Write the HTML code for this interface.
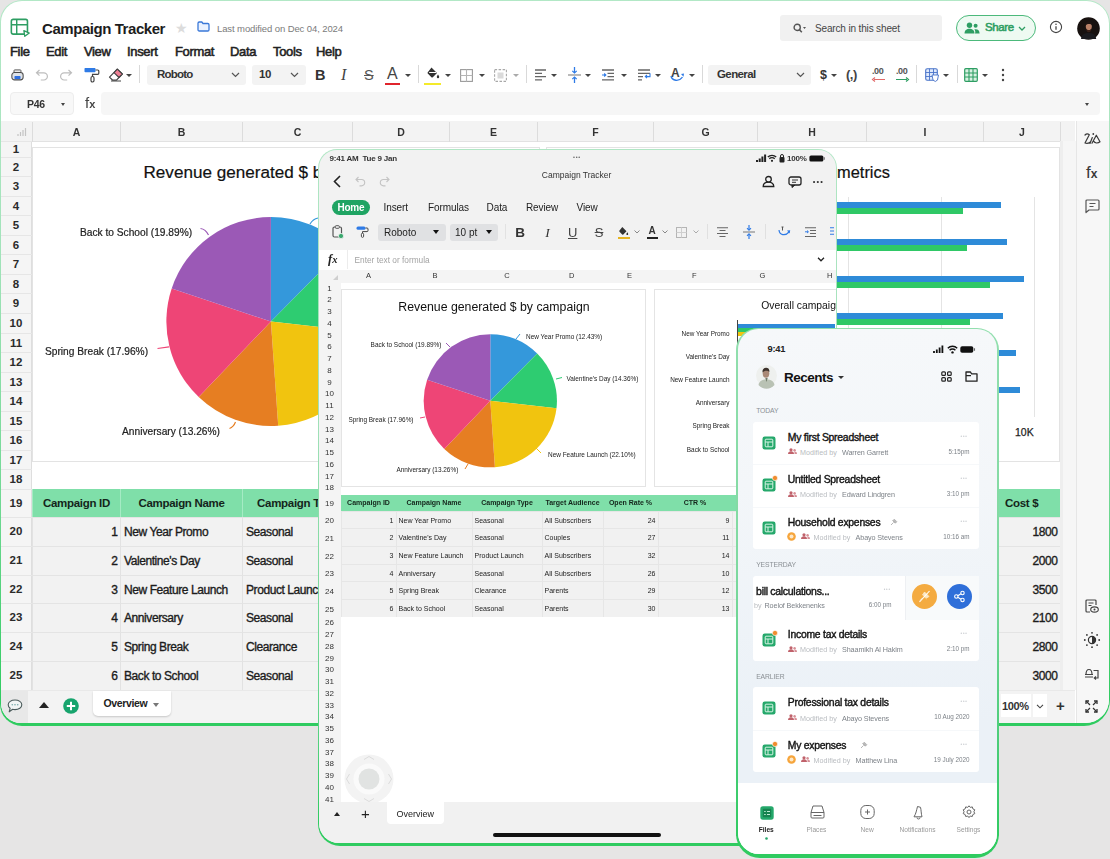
<!DOCTYPE html>
<html lang="en">
<head>
<meta charset="utf-8">
<title>Campaign Tracker</title>
<style>
*{box-sizing:border-box;margin:0;padding:0}
html,body{width:1110px;height:859px;overflow:hidden}
body{background:#e6e5e5;font-family:"Liberation Sans",sans-serif;color:#222;position:relative}
.abs{position:absolute}
svg{position:absolute;overflow:visible}
/* ---------- desktop ---------- */
#desk,#tab,#ph{filter:blur(.6px)}
#desk{position:absolute;left:0;top:0;width:1110px;height:726px;background:linear-gradient(180deg,#b2e8c6 0,#a2e3ba 35%,#6fd892 70%,#2fcb60 97%);border-radius:22px 24px 26px 22px;overflow:hidden}
#desk .clip{position:absolute;left:1px;top:1px;right:1.5px;bottom:3px;background:#fff;border-radius:21px 22.5px 23.5px 20px;overflow:hidden}
#desk .in{position:absolute;left:-1px;top:-1px;width:1110px;height:726px}
.t{position:absolute;white-space:nowrap;line-height:1}
.menu{font-size:13px;font-weight:normal;color:#222;top:44.5px;letter-spacing:-.35px;-webkit-text-stroke:.55px #222}
.car{position:absolute;width:0;height:0;border-left:3px solid transparent;border-right:3px solid transparent;border-top:3.5px solid #444}
.sep{position:absolute;width:1px;background:#d9d9d9;top:65px;height:18px}
.box{position:absolute;background:#f3f3f3;border-radius:3px}
.colh{position:absolute;top:121.5px;height:20px;font-size:10.5px;font-weight:bold;color:#333;text-align:center;line-height:20px;border-left:1px solid #dcdcdc}
.rowh{position:absolute;left:0;width:32px;font-size:11.5px;font-weight:bold;color:#2b2b2b;text-align:center;border-top:1px solid #e6e6e6}
.gl{position:absolute;background:#e9e9e9}
.th{position:absolute;top:489px;height:28px;background:#7fdfa9;font-size:11.5px;font-weight:bold;color:#14251b;line-height:28px;text-align:center;border-left:1px solid #a5ebc4;letter-spacing:-.3px}
.td{position:absolute;height:29px;background:#f2f2f2;font-size:12px;letter-spacing:-.42px;color:#1c1c1c;line-height:28px;border-left:1px solid #e2e2e2;border-top:1px solid #e4e4e4;padding:0 2.5px 0 3px;white-space:nowrap;overflow:hidden;-webkit-text-stroke:.35px #1c1c1c}
.r{text-align:right}
/* ---------- tablet ---------- */
#tab{position:absolute;left:318px;top:149px;width:519px;height:697px;background:linear-gradient(180deg,#b0e6c4 0,#9fe0b7 40%,#62d48a 80%,#2fcb60 97%);border-radius:19px 19px 22px 22px;overflow:hidden}
#tab .clip{position:absolute;left:1px;top:1px;right:1.5px;bottom:3px;background:#f2f2f2;border-radius:18px 17.5px 19.5px 20px;overflow:hidden}
#tab .in{position:absolute;left:0;top:0;width:519px;height:697px}
.th2{position:absolute;height:16px;background:#7fdfa9;font-size:7px;font-weight:bold;color:#14251b;line-height:16px;text-align:center;white-space:nowrap;overflow:hidden}
.td2{position:absolute;height:17.7px;background:#f1f1f1;font-size:7px;color:#222;line-height:17px;border-left:1px solid #e6e6e6;border-top:1px solid #e6e6e6;padding:0 2.5px 0 1.5px;white-space:nowrap;overflow:hidden}
/* ---------- phone ---------- */
#ph{position:absolute;left:736px;top:327.5px;width:262.5px;height:530.5px;background:linear-gradient(180deg,#92dfae 0,#7fd9a0 45%,#48cd77 80%,#2fcb60 97%);border-radius:22px 22px 24px 24px;overflow:hidden}
#ph .clip{position:absolute;left:1.5px;top:1.5px;right:2px;bottom:4px;background:linear-gradient(#f6f8fa 0,#f3f6f9 30%,#ebf1f7 75%,#ebf1f7 100%);border-radius:20.5px 20px 20px 21px;overflow:hidden}
#ph .in{position:absolute;left:-.5px;top:-.5px;width:263px;height:529px}
</style>
</head>
<body>
<!-- ======================= DESKTOP WINDOW ======================= -->
<div id="desk"><div class="clip"><div class="in">
<!-- title row -->
<svg style="left:9.500px;top:18px" width="21.500" height="20.600" viewBox="0 0 24 23"><rect x="1.5" y="1.5" width="18" height="16.5" rx="2" fill="none" stroke="#2e9e63" stroke-width="1.8"/><path d="M1.5 7.5h18M7.5 1.5v16.5" stroke="#2e9e63" stroke-width="1.6" fill="none"/><path d="M15.5 14.2l6 2.6-5 3.6z" fill="#fff" stroke="#2e9e63" stroke-width="1.5" stroke-linejoin="round"/></svg>
<div class="t" style="left:42px;top:21px;font-size:15px;font-weight:bold;color:#1d1d1d;letter-spacing:-.44px">Campaign Tracker</div>
<div class="t" style="left:175px;top:21px;font-size:14px;color:#dcdcdc">★</div>
<svg style="left:197px;top:21px" width="13" height="11" viewBox="0 0 13 11"><path d="M1 2.2a1.2 1.2 0 0 1 1.2-1.2h2.6l1.2 1.5h4.8a1.2 1.2 0 0 1 1.2 1.2v5.1a1.2 1.2 0 0 1-1.2 1.2h-8.600a1.200 1.200 0 0 1-1.200-1.200z" fill="#eaf2ff" stroke="#3a78d8" stroke-width="1.3"/></svg>
<div class="t" style="left:217px;top:24px;font-size:9.5px;color:#7b7b7b;letter-spacing:-.1px">Last modified on Dec 04, 2024</div>
<div class="box" style="left:780px;top:15px;width:162px;height:26px;background:#f1f1f1"></div>
<svg style="left:793px;top:23px" width="14" height="11" viewBox="0 0 14 11"><circle cx="4.200" cy="4.400" r="3.100" fill="none" stroke="#555" stroke-width="1.400"/><path d="M6.500 6.800l2.300 2.500" stroke="#555" stroke-width="1.500"/><path d="M10 4l3 0-1.500 2z" fill="#555"/></svg>
<div class="t" style="left:815px;top:24px;font-size:10px;color:#454545;letter-spacing:-.15px">Search in this sheet</div>
<div class="abs" style="left:956px;top:15px;width:80px;height:26px;border-radius:13px;border:1.5px solid #4cb97b;background:#eefaf2"></div>
<svg style="left:964px;top:22px" width="16" height="12" viewBox="0 0 16 12"><circle cx="5.500" cy="3.200" r="2.700" fill="#2e9e63"/><path d="M0.500 11.500c0-3.200 2.200-4.800 5-4.800s5 1.600 5 4.800z" fill="#2e9e63"/><circle cx="11.600" cy="3.800" r="2" fill="#2e9e63"/><path d="M11 11.500h4.600c0-2.800-1.500-4.300-3.900-4.300-.6 0-1 .1-1.400.3 1 .9 1.300 2.300.700 4z" fill="#2e9e63"/></svg>
<div class="t" style="left:985px;top:22px;font-size:11.500px;font-weight:normal;color:#2e9e63;letter-spacing:-.4px;-webkit-text-stroke:.55px #2e9e63">Share</div>
<svg style="left:1018px;top:26px" width="8" height="6" viewBox="0 0 8 6"><path d="M1 1l3 3 3-3" fill="none" stroke="#2e9e63" stroke-width="1.300"/></svg>
<svg style="left:1049px;top:20px" width="14" height="14" viewBox="0 0 14 14"><circle cx="7" cy="7" r="5.600" fill="none" stroke="#444" stroke-width="1.100"/><path d="M7 6.200v3.600" stroke="#444" stroke-width="1.300"/><circle cx="7" cy="4.300" r=".8" fill="#444"/></svg>
<svg style="left:1077px;top:17px" width="23" height="23" viewBox="0 0 23 23"><circle cx="11.500" cy="11.500" r="11.300" fill="#17110f"/><ellipse cx="11.800" cy="9.500" rx="3" ry="3.800" fill="#b98067"/><path d="M8.600 8.500c0-3 1.400-4.200 3.300-4.200s3.200 1.300 3.100 4c-1-1.600-4.600-2-6.400.2z" fill="#1d1412"/><path d="M9.300 11.500c.7 2.400 4.200 2.400 5 0 0 2.600-.8 3.700-2.500 3.700s-2.500-1.100-2.500-3.700z" fill="#3a2118"/><path d="M4 22c.5-4.500 3.500-6 7.600-6s7.100 1.500 7.600 6z" fill="#1a1a1e"/></svg>
<!-- menu row -->
<div class="t menu" style="left:10px">File</div>
<div class="t menu" style="left:46px">Edit</div>
<div class="t menu" style="left:84px">View</div>
<div class="t menu" style="left:127px">Insert</div>
<div class="t menu" style="left:175px">Format</div>
<div class="t menu" style="left:230px">Data</div>
<div class="t menu" style="left:273px">Tools</div>
<div class="t menu" style="left:316px">Help</div>
<!-- toolbar row -->
<svg style="left:10.500px;top:68.500px" width="13" height="12.200" viewBox="0 0 15 14"><path d="M3.500 4v-2.200a.8.800 0 0 1 .8-.8h6.400a.8.800 0 0 1 .8.800v2.200" fill="#e9e9e9" stroke="#555" stroke-width="1.100"/><rect x="1" y="4" width="13" height="8.500" rx="3" fill="#dfe3e8" stroke="#4a4a4a" stroke-width="1.200"/><rect x="4" y="8" width="7" height="3.500" rx=".8" fill="#2f6fe0"/></svg>
<svg style="left:35px;top:69px" width="14" height="12" viewBox="0 0 14 12"><path d="M4.500 1l-3 2.800 3 2.800M1.800 3.800h7a3.600 3.600 0 0 1 0 7.200h-3" fill="none" stroke="#bdbdbd" stroke-width="1.200"/></svg>
<svg style="left:59px;top:69px" width="14" height="12" viewBox="0 0 14 12"><path d="M9.500 1l3 2.800-3 2.800M12.200 3.800h-7a3.600 3.600 0 0 0 0 7.200h3" fill="none" stroke="#bdbdbd" stroke-width="1.200"/></svg>
<svg style="left:84px;top:67px" width="16" height="16" viewBox="0 0 16 16"><rect x=".5" y="1" width="11" height="4.200" rx=".8" fill="#2f7be6"/><path d="M11.500 3h2.300a1 1 0 0 1 1 1v2.300a1 1 0 0 1-1 1h-5.300v2.200" fill="none" stroke="#444" stroke-width="1.200"/><rect x="7" y="9.500" width="3" height="5.500" rx="1.400" fill="#fff" stroke="#444" stroke-width="1.200"/></svg>
<svg style="left:108px;top:68px" width="16" height="14" viewBox="0 0 16 14"><path d="M9.300 1.200l5 4.800-5.800 6.200h-3.800l-3.200-3.100z" fill="#fff" stroke="#444" stroke-width="1.200" stroke-linejoin="round"/><path d="M9.300 1.200l5 4.800-3.300 3.500-5-4.800z" fill="#ef7f94" stroke="#444" stroke-width="1.100" stroke-linejoin="round"/><path d="M3 13h10" stroke="#444" stroke-width="1.100"/></svg>
<div class="car" style="left:126px;top:74px"></div>
<div class="sep" style="left:139px"></div>
<div class="box" style="left:147px;top:65px;width:99px;height:19.500px"></div>
<div class="t" style="left:157px;top:69px;font-size:11.5px;font-weight:bold;color:#333;letter-spacing:-.8px">Roboto</div>
<svg style="left:231px;top:72px" width="9" height="6" viewBox="0 0 9 6"><path d="M1 1l3.500 3.500 3.500-3.500" fill="none" stroke="#555" stroke-width="1.200"/></svg>
<div class="box" style="left:252px;top:65px;width:54px;height:19.500px"></div>
<div class="t" style="left:259px;top:69px;font-size:11.5px;font-weight:bold;color:#333;letter-spacing:-.3px">10</div>
<svg style="left:290px;top:72px" width="9" height="6" viewBox="0 0 9 6"><path d="M1 1l3.500 3.500 3.500-3.500" fill="none" stroke="#555" stroke-width="1.200"/></svg>
<div class="t" style="left:315px;top:67.500px;font-size:14.500px;font-weight:bold;color:#333">B</div>
<div class="t" style="left:341px;top:67px;font-size:16px;font-style:italic;color:#444;font-family:'Liberation Serif',serif">I</div>
<div class="t" style="left:364px;top:68px;font-size:14.5px;color:#555;text-decoration:line-through">S</div>
<div class="t" style="left:387px;top:66px;font-size:16px;color:#444">A</div>
<div class="abs" style="left:385px;top:82.500px;width:15px;height:2px;background:#e0242c"></div>
<div class="car" style="left:405px;top:74px"></div>
<div class="sep" style="left:418px"></div>
<svg style="left:426px;top:66px" width="14" height="14" viewBox="0 0 14 14"><path d="M5.500 1.500l5.500 5.500-4.200 4.200a1 1 0 0 1-1.400 0l-3.600-3.600a1 1 0 0 1 0-1.400z" fill="#333"/><path d="M3.200 6.500h7" stroke="#fff" stroke-width="1"/><path d="M12 8.500c.8 1.200 1.200 1.900 1.200 2.500a1.200 1.200 0 0 1-2.400 0c0-.6.400-1.300 1.200-2.500z" fill="#333"/></svg>
<div class="abs" style="left:424px;top:82.500px;width:17px;height:2px;background:#f4ea2a"></div>
<div class="car" style="left:445px;top:74px"></div>
<svg style="left:460px;top:69px" width="13" height="13" viewBox="0 0 13 13"><rect x=".6" y=".6" width="11.800" height="11.800" fill="none" stroke="#9a9a9a" stroke-width="1.100"/><path d="M6.500 .6v11.800M.6 6.500h11.800" stroke="#b5b5b5" stroke-width="1.100"/></svg>
<div class="car" style="left:479px;top:74px"></div>
<svg style="left:494px;top:69px" width="13" height="13" viewBox="0 0 13 13"><rect x=".6" y=".6" width="11.800" height="11.800" fill="none" stroke="#a8a8a8" stroke-width="1.100" stroke-dasharray="2.500 1.500"/><rect x="3.500" y="3.500" width="6" height="6" fill="#dadada"/></svg>
<div class="car" style="left:513px;top:74px;border-top-color:#aaa"></div>
<div class="sep" style="left:526px"></div>
<svg style="left:535px;top:69px" width="12" height="12" viewBox="0 0 12 12"><path d="M0 1h11M0 4.300h7M0 7.600h11M0 10.900h7" stroke="#666" stroke-width="1.300"/></svg>
<div class="car" style="left:551px;top:74px"></div>
<svg style="left:568px;top:67px" width="13" height="16" viewBox="0 0 13 16"><path d="M0 8h13" stroke="#777" stroke-width="1.200"/><path d="M6.500 0v5.500M6.500 16v-5.500" stroke="#2f7be6" stroke-width="1.300"/><path d="M4.300 3.800l2.200 2.200 2.200-2.200M4.300 12.200l2.200-2.200 2.200 2.200" fill="none" stroke="#2f7be6" stroke-width="1.200"/></svg>
<div class="car" style="left:585px;top:74px"></div>
<svg style="left:602px;top:69px" width="12" height="12" viewBox="0 0 12 12"><path d="M0 1h12M5.500 4.300h6.500M5.500 7.600h6.500M0 10.900h12" stroke="#666" stroke-width="1.300"/><path d="M0 6h3.500M2.200 4.500l1.600 1.500-1.600 1.500" fill="none" stroke="#2f7be6" stroke-width="1.100"/></svg>
<div class="car" style="left:621px;top:74px"></div>
<svg style="left:638px;top:69px" width="13" height="12" viewBox="0 0 13 12"><path d="M0 1h12M0 4.300h12M0 7.600h5M0 10.900h4" stroke="#666" stroke-width="1.300"/><path d="M12 4.300v3.300h-4.500M9 6l-1.700 1.600 1.700 1.600" fill="none" stroke="#2f7be6" stroke-width="1.100"/></svg>
<div class="car" style="left:655px;top:74px"></div>
<div class="t" style="left:671px;top:67px;font-size:12px;font-weight:bold;color:#444">A</div>
<svg style="left:670px;top:71px" width="16" height="12" viewBox="0 0 16 12"><path d="M1 5c1 5 8 6 11.500 1" fill="none" stroke="#2f7be6" stroke-width="1.300"/><path d="M11 3l3-.5-.5 3.200z" fill="#2f7be6"/></svg>
<div class="car" style="left:689px;top:74px"></div>
<div class="sep" style="left:702px"></div>
<div class="box" style="left:708px;top:65px;width:103px;height:19.500px"></div>
<div class="t" style="left:717px;top:69px;font-size:11.500px;font-weight:bold;color:#333;letter-spacing:-.6px">General</div>
<svg style="left:796px;top:72px" width="9" height="6" viewBox="0 0 9 6"><path d="M1 1l3.500 3.500 3.500-3.500" fill="none" stroke="#555" stroke-width="1.200"/></svg>
<div class="t" style="left:820px;top:68.500px;font-size:12.500px;font-weight:bold;color:#333">$</div>
<div class="car" style="left:831px;top:74px"></div>
<div class="t" style="left:846px;top:68px;font-size:13px;font-weight:bold;color:#444;letter-spacing:-.5px">(,)</div>
<div class="t" style="left:872px;top:67px;font-size:9px;font-weight:bold;color:#555;letter-spacing:-.4px">.00</div>
<svg style="left:872px;top:77px" width="13" height="5" viewBox="0 0 13 5"><path d="M13 2.500h-11M3 .5l-2.500 2 2.500 2" fill="none" stroke="#e26a6a" stroke-width="1.200"/></svg>
<div class="t" style="left:896px;top:67px;font-size:9px;font-weight:bold;color:#555;letter-spacing:-.4px">.00</div>
<svg style="left:896px;top:77px" width="13" height="5" viewBox="0 0 13 5"><path d="M0 2.500h11M10 .5l2.500 2-2.500 2" fill="none" stroke="#2e9e63" stroke-width="1.200"/></svg>
<div class="sep" style="left:916px"></div>
<svg style="left:925px;top:68px" width="14" height="14" viewBox="0 0 14 14"><rect x=".7" y=".7" width="11.600" height="11.600" rx="1.500" fill="#dfe9fb" stroke="#4a74c9" stroke-width="1.100"/><path d="M.7 4.500h11.600M4.500 .7v11.600M8.500 .7v11.600M.7 8.500h11.600" stroke="#4a74c9" stroke-width=".9"/><path d="M7 7h6.500l-1 5-2.200 1.500-2.300-1.500z" fill="#fff" stroke="#4a74c9" stroke-width=".9"/></svg>
<div class="car" style="left:943px;top:74px"></div>
<div class="sep" style="left:957px"></div>
<svg style="left:964px;top:68px" width="14" height="14" viewBox="0 0 14 14"><rect x=".7" y=".7" width="12.600" height="12.600" rx="1" fill="#d8f1e2" stroke="#2e9e63" stroke-width="1.200"/><path d="M.7 5h12.600M.7 9h12.600M5 .7v12.600M9 .7v12.600" stroke="#2e9e63" stroke-width="1.100"/></svg>
<div class="car" style="left:982px;top:74px"></div>
<svg style="left:1001px;top:68px" width="4" height="14" viewBox="0 0 4 14"><circle cx="2" cy="2" r="1.200" fill="#444"/><circle cx="2" cy="7" r="1.200" fill="#444"/><circle cx="2" cy="12" r="1.200" fill="#444"/></svg>
<!-- formula row -->
<div class="abs" style="left:10px;top:92px;width:64px;height:22.500px;background:#f8f8f8;border:1px solid #ededed;border-radius:4px"></div>
<div class="t" style="left:27px;top:98.7px;font-size:10.500px;font-weight:bold;color:#333;letter-spacing:-.3px">P46</div>
<div class="car" style="left:61px;top:102.7px;border-left-width:2.500px;border-right-width:2.500px;border-top-width:3px"></div>
<div class="t" style="left:85px;top:94.7px;font-size:15px;color:#444;font-family:'Liberation Sans',sans-serif">f<span style="font-size:11px;font-weight:bold">x</span></div>
<div class="abs" style="left:101px;top:92px;width:999px;height:22.500px;background:#f6f6f6;border-radius:4px"></div>
<div class="car" style="left:1085px;top:102.7px;border-left-width:2.500px;border-right-width:2.500px;border-top-width:3px"></div>

<!-- grid -->
<div class="abs" style="left:0;top:121px;width:1075px;height:21px;background:#f3f3f3;border-bottom:1px solid #e2e2e2"></div>
<div class="abs" style="left:0;top:141px;width:32px;height:549px;background:#f5f5f5;border-right:1px solid #dedede"></div>
<svg style="left:17px;top:128px" width="9" height="8" viewBox="0 0 9 8"><path d="M1 8v-2M3.500 8v-4M6 8v-6M8.500 8v-8" stroke="#c4c4c4" stroke-width="1.200"/></svg>
<div class="colh" style="left:32px;width:88px">A</div>
<div class="colh" style="left:120px;width:122px">B</div>
<div class="colh" style="left:242px;width:110px">C</div>
<div class="colh" style="left:352px;width:97px">D</div>
<div class="colh" style="left:449px;width:88px">E</div>
<div class="colh" style="left:537px;width:116px">F</div>
<div class="colh" style="left:653px;width:104px">G</div>
<div class="colh" style="left:757px;width:109px">H</div>
<div class="colh" style="left:866px;width:117px">I</div>
<div class="colh" style="left:983px;width:77px">J</div>
<div class="colh" style="left:1060px;width:15px;background:#f3f3f3"></div>
<div class="abs" style="left:33px;top:142px;width:1027px;height:548px;background:#fff"></div>
<div class="abs" style="left:1060px;top:141px;width:16px;height:549px;background:#f6f6f6;border-left:3px solid #eeeeee"></div>
<div class="rowh" style="top:141.0px;height:15.0px;line-height:14.0px">1</div>
<div class="rowh" style="top:156.5px;height:19.6px;line-height:18.6px">2</div>
<div class="rowh" style="top:176.1px;height:19.6px;line-height:18.6px">3</div>
<div class="rowh" style="top:195.6px;height:19.6px;line-height:18.6px">4</div>
<div class="rowh" style="top:215.2px;height:19.6px;line-height:18.6px">5</div>
<div class="rowh" style="top:234.7px;height:19.6px;line-height:18.6px">6</div>
<div class="rowh" style="top:254.3px;height:19.6px;line-height:18.6px">7</div>
<div class="rowh" style="top:273.8px;height:19.6px;line-height:18.6px">8</div>
<div class="rowh" style="top:293.4px;height:19.6px;line-height:18.6px">9</div>
<div class="rowh" style="top:312.9px;height:19.6px;line-height:18.6px">10</div>
<div class="rowh" style="top:332.5px;height:19.6px;line-height:18.6px">11</div>
<div class="rowh" style="top:352.0px;height:19.6px;line-height:18.6px">12</div>
<div class="rowh" style="top:371.6px;height:19.6px;line-height:18.6px">13</div>
<div class="rowh" style="top:391.1px;height:19.6px;line-height:18.6px">14</div>
<div class="rowh" style="top:410.7px;height:19.6px;line-height:18.6px">15</div>
<div class="rowh" style="top:430.2px;height:19.6px;line-height:18.6px">16</div>
<div class="rowh" style="top:449.8px;height:19.6px;line-height:18.6px">17</div>
<div class="rowh" style="top:469.3px;height:19.6px;line-height:18.6px">18</div>
<div class="rowh" style="top:489.0px;height:28.0px;line-height:27.0px">19</div>
<div class="rowh" style="top:517.0px;height:28.8px;line-height:27.8px">20</div>
<div class="rowh" style="top:545.8px;height:28.8px;line-height:27.8px">21</div>
<div class="rowh" style="top:574.6px;height:28.8px;line-height:27.8px">22</div>
<div class="rowh" style="top:603.4px;height:28.8px;line-height:27.8px">23</div>
<div class="rowh" style="top:632.2px;height:28.8px;line-height:27.8px">24</div>
<div class="rowh" style="top:661.0px;height:28.8px;line-height:27.8px">25</div>
<div class="abs" style="left:32px;top:147px;width:508px;height:315px;background:#fff;border:1px solid #e3e3e3"></div>
<div class="abs" style="left:546px;top:147px;width:514px;height:315px;background:#fff;border:1px solid #e3e3e3"></div>
<div class="t" style="left:143.500px;top:163.500px;font-size:17.100px;color:#111;-webkit-text-stroke:.2px #111">Revenue generated $ by campaign</div>
<div class="t" style="left:705px;top:163.500px;font-size:16.400px;color:#111;-webkit-text-stroke:.2px #111">Overall campaign metrics</div>
<svg style="left:0;top:0" width="560" height="480" viewBox="0 0 560 480"><path d="M270.9 321.5L270.9 217.0A104.5 104.5 0 0 1 344.5 247.3Z" fill="#3498db"/><path d="M270.9 321.5L344.5 247.3A104.5 104.5 0 0 1 374.7 333.2Z" fill="#2ecc71"/><path d="M270.9 321.5L374.7 333.2A104.5 104.5 0 0 1 278.2 425.7Z" fill="#f1c40f"/><path d="M270.9 321.5L278.2 425.7A104.5 104.5 0 0 1 198.7 397.0Z" fill="#e67e22"/><path d="M270.9 321.5L198.7 397.0A104.5 104.5 0 0 1 171.7 288.5Z" fill="#ee4576"/><path d="M270.9 321.5L171.7 288.5A104.5 104.5 0 0 1 270.9 217.0Z" fill="#9b59b6"/><path d="M200.500 228.500q5 .5 8 6.500" fill="none" stroke="#9b59b6" stroke-width="1.200"/><path d="M157.500 348.500l11.500-1.700" fill="none" stroke="#ee4576" stroke-width="1.200"/><path d="M229.500 428.500q4-1.500 6-6.500" fill="none" stroke="#e67e22" stroke-width="1.200"/><path d="M310 224q3-5 8-6" fill="none" stroke="#3498db" stroke-width="1.200"/></svg>
<div class="t" style="left:80px;top:228.300px;font-size:10.200px;color:#222;-webkit-text-stroke:.2px #222">Back to School (19.89%)</div>
<div class="t" style="left:45px;top:347.300px;font-size:10.200px;color:#222;-webkit-text-stroke:.2px #222">Spring Break (17.96%)</div>
<div class="t" style="left:122px;top:427.300px;font-size:10.200px;color:#222;-webkit-text-stroke:.2px #222">Anniversary (13.26%)</div>
<div class="t" style="left:322px;top:212px;font-size:11px;color:#222">New Year Promo (12.43%)</div>
<div class="abs" style="left:848px;top:197px;width:1px;height:220px;background:#e4e4e4"></div>
<div class="abs" style="left:941px;top:197px;width:1px;height:220px;background:#e4e4e4"></div>
<div class="abs" style="left:1034px;top:197px;width:1px;height:220px;background:#e4e4e4"></div>
<div class="abs" style="left:754px;top:197px;width:1px;height:220px;background:#e4e4e4"></div>
<div class="abs" style="left:660px;top:202.3px;width:341px;height:5.600px;background:#2e8bd8"></div>
<div class="abs" style="left:660px;top:208.2px;width:303px;height:5.600px;background:#2fc866"></div>
<div class="t" style="left:560px;top:203.3px;width:92px;text-align:right;font-size:10px;color:#222">New Year Promo</div>
<div class="abs" style="left:660px;top:239.3px;width:347px;height:5.600px;background:#2e8bd8"></div>
<div class="abs" style="left:660px;top:245.2px;width:307px;height:5.600px;background:#2fc866"></div>
<div class="t" style="left:560px;top:240.3px;width:92px;text-align:right;font-size:10px;color:#222">Valentine's Day</div>
<div class="abs" style="left:660px;top:276.3px;width:364px;height:5.600px;background:#2e8bd8"></div>
<div class="abs" style="left:660px;top:282.2px;width:330px;height:5.600px;background:#2fc866"></div>
<div class="t" style="left:560px;top:277.3px;width:92px;text-align:right;font-size:10px;color:#222">New Feature Launch</div>
<div class="abs" style="left:660px;top:313.3px;width:343px;height:5.600px;background:#2e8bd8"></div>
<div class="abs" style="left:660px;top:319.2px;width:310px;height:5.600px;background:#2fc866"></div>
<div class="t" style="left:560px;top:314.3px;width:92px;text-align:right;font-size:10px;color:#222">Anniversary</div>
<div class="abs" style="left:660px;top:350.3px;width:356px;height:5.600px;background:#2e8bd8"></div>
<div class="abs" style="left:660px;top:356.2px;width:315px;height:5.600px;background:#2fc866"></div>
<div class="t" style="left:560px;top:351.3px;width:92px;text-align:right;font-size:10px;color:#222">Spring Break</div>
<div class="abs" style="left:660px;top:387.3px;width:359.5px;height:5.600px;background:#2e8bd8"></div>
<div class="abs" style="left:660px;top:393.2px;width:320px;height:5.600px;background:#2fc866"></div>
<div class="t" style="left:560px;top:388.3px;width:92px;text-align:right;font-size:10px;color:#222">Back to School</div>
<div class="t" style="left:1015px;top:427px;font-size:10.500px;color:#222;-webkit-text-stroke:.25px #222">10K</div>
<div class="t" style="left:930px;top:427px;font-size:10.500px;color:#222;-webkit-text-stroke:.25px #222">5K</div>
<div class="th" style="left:32px;width:88px">Campaign ID</div>
<div class="th" style="left:120px;width:122px">Campaign Name</div>
<div class="th" style="left:242px;width:110px">Campaign Type</div>
<div class="th" style="left:352px;width:97px">Target Audience</div>
<div class="th" style="left:449px;width:88px">Open Rate %</div>
<div class="th" style="left:537px;width:116px">CTR %</div>
<div class="th" style="left:653px;width:104px">Conversions</div>
<div class="th" style="left:757px;width:109px">Revenue $</div>
<div class="th" style="left:866px;width:117px">Budget $</div>
<div class="th" style="left:983px;width:77px;text-align:left;padding-left:21px">Cost $</div>
<div class="td r" style="left:32px;top:517.0px;width:88px">1</div>
<div class="td" style="left:120px;top:517.0px;width:122px">New Year Promo</div>
<div class="td" style="left:242px;top:517.0px;width:110px">Seasonal</div>
<div class="td" style="left:352px;top:517.0px;width:97px">All Subscribers</div>
<div class="td r" style="left:449px;top:517.0px;width:88px">24</div>
<div class="td r" style="left:537px;top:517.0px;width:116px">9</div>
<div class="td r" style="left:653px;top:517.0px;width:104px">520</div>
<div class="td r" style="left:757px;top:517.0px;width:109px">6240</div>
<div class="td r" style="left:866px;top:517.0px;width:117px">2000</div>
<div class="td r" style="left:983px;top:517.0px;width:77px">1800</div>
<div class="td r" style="left:32px;top:545.8px;width:88px">2</div>
<div class="td" style="left:120px;top:545.8px;width:122px">Valentine's Day</div>
<div class="td" style="left:242px;top:545.8px;width:110px">Seasonal</div>
<div class="td" style="left:352px;top:545.8px;width:97px">Couples</div>
<div class="td r" style="left:449px;top:545.8px;width:88px">27</div>
<div class="td r" style="left:537px;top:545.8px;width:116px">11</div>
<div class="td r" style="left:653px;top:545.8px;width:104px">610</div>
<div class="td r" style="left:757px;top:545.8px;width:109px">7210</div>
<div class="td r" style="left:866px;top:545.8px;width:117px">2200</div>
<div class="td r" style="left:983px;top:545.8px;width:77px">2000</div>
<div class="td r" style="left:32px;top:574.6px;width:88px">3</div>
<div class="td" style="left:120px;top:574.6px;width:122px">New Feature Launch</div>
<div class="td" style="left:242px;top:574.6px;width:110px">Product Launch</div>
<div class="td" style="left:352px;top:574.6px;width:97px">All Subscribers</div>
<div class="td r" style="left:449px;top:574.6px;width:88px">32</div>
<div class="td r" style="left:537px;top:574.6px;width:116px">14</div>
<div class="td r" style="left:653px;top:574.6px;width:104px">940</div>
<div class="td r" style="left:757px;top:574.6px;width:109px">11100</div>
<div class="td r" style="left:866px;top:574.6px;width:117px">3800</div>
<div class="td r" style="left:983px;top:574.6px;width:77px">3500</div>
<div class="td r" style="left:32px;top:603.4px;width:88px">4</div>
<div class="td" style="left:120px;top:603.4px;width:122px">Anniversary</div>
<div class="td" style="left:242px;top:603.4px;width:110px">Seasonal</div>
<div class="td" style="left:352px;top:603.4px;width:97px">All Subscribers</div>
<div class="td r" style="left:449px;top:603.4px;width:88px">26</div>
<div class="td r" style="left:537px;top:603.4px;width:116px">10</div>
<div class="td r" style="left:653px;top:603.4px;width:104px">560</div>
<div class="td r" style="left:757px;top:603.4px;width:109px">6660</div>
<div class="td r" style="left:866px;top:603.4px;width:117px">2300</div>
<div class="td r" style="left:983px;top:603.4px;width:77px">2100</div>
<div class="td r" style="left:32px;top:632.2px;width:88px">5</div>
<div class="td" style="left:120px;top:632.2px;width:122px">Spring Break</div>
<div class="td" style="left:242px;top:632.2px;width:110px">Clearance</div>
<div class="td" style="left:352px;top:632.2px;width:97px">Parents</div>
<div class="td r" style="left:449px;top:632.2px;width:88px">29</div>
<div class="td r" style="left:537px;top:632.2px;width:116px">12</div>
<div class="td r" style="left:653px;top:632.2px;width:104px">760</div>
<div class="td r" style="left:757px;top:632.2px;width:109px">9020</div>
<div class="td r" style="left:866px;top:632.2px;width:117px">3000</div>
<div class="td r" style="left:983px;top:632.2px;width:77px">2800</div>
<div class="td r" style="left:32px;top:661.0px;width:88px">6</div>
<div class="td" style="left:120px;top:661.0px;width:122px">Back to School</div>
<div class="td" style="left:242px;top:661.0px;width:110px">Seasonal</div>
<div class="td" style="left:352px;top:661.0px;width:97px">Parents</div>
<div class="td r" style="left:449px;top:661.0px;width:88px">30</div>
<div class="td r" style="left:537px;top:661.0px;width:116px">13</div>
<div class="td r" style="left:653px;top:661.0px;width:104px">840</div>
<div class="td r" style="left:757px;top:661.0px;width:109px">9990</div>
<div class="td r" style="left:866px;top:661.0px;width:117px">3200</div>
<div class="td r" style="left:983px;top:661.0px;width:77px">3000</div>
<div class="abs" style="left:32px;top:689.5px;width:1028px;height:1px;background:#e4e4e4"></div>

<!-- right sidebar -->
<div class="abs" style="left:1076px;top:121px;width:35px;height:605px;background:#f7f7f7;border-left:1px solid #e6e6e6"></div>
<svg style="left:1084px;top:132px" width="17" height="13" viewBox="0 0 17 13"><path d="M1 3c1.200-1.300 3-1.500 4.300-.3l-4.300 8.300c1.800.6 3.600.3 5-.8M6 11.500l2.300-6M8 11.200l4.300-8 3.700 6.500c-2 1.800-5 1.800-6.500-.5" fill="none" stroke="#3a3a3a" stroke-width="1.200" stroke-linecap="round" stroke-linejoin="round"/><circle cx="9.300" cy="2" r=".9" fill="#3a3a3a"/></svg>
<div class="t" style="left:1086px;top:164px;font-size:17px;color:#3a3a3a">f<span style="font-size:12px;font-weight:bold">x</span></div>
<svg style="left:1085px;top:199px" width="15" height="14" viewBox="0 0 15 14"><path d="M2 1h11a1 1 0 0 1 1 1v8a1 1 0 0 1-1 1h-9l-3 2.500v-11.500a1 1 0 0 1 1-1z" fill="none" stroke="#555" stroke-width="1.200" stroke-linejoin="round"/><path d="M4.500 4.500h6M4.500 7.500h4" stroke="#555" stroke-width="1.100"/></svg>
<svg style="left:1085px;top:599px" width="14" height="15" viewBox="0 0 14 15"><path d="M11 6v-4a1 1 0 0 0-1-1h-8a1 1 0 0 0-1 1v10a1 1 0 0 0 1 1h3" fill="none" stroke="#444" stroke-width="1.200"/><path d="M3.500 4h5M3.500 6.500h3" stroke="#444" stroke-width="1"/><ellipse cx="9.500" cy="10.500" rx="3.800" ry="2.600" fill="none" stroke="#444" stroke-width="1.100"/><circle cx="9.500" cy="10.500" r="1" fill="#444"/></svg>
<svg style="left:1083px;top:631px" width="18" height="18" viewBox="0 0 18 18"><circle cx="9" cy="9" r="3.600" fill="none" stroke="#333" stroke-width="1.200"/><path d="M9 5.400a3.600 3.600 0 0 1 0 7.200z" fill="#333"/><g fill="#333"><circle cx="9" cy="1.800" r=".9"/><circle cx="9" cy="16.200" r=".9"/><circle cx="1.800" cy="9" r=".9"/><circle cx="16.200" cy="9" r=".9"/><circle cx="3.900" cy="3.900" r=".9"/><circle cx="14.100" cy="3.900" r=".9"/><circle cx="3.900" cy="14.100" r=".9"/><circle cx="14.100" cy="14.100" r=".9"/></g></svg>
<svg style="left:1084px;top:667px" width="16" height="14" viewBox="0 0 16 14"><path d="M1 7.500h8M1 10h8" stroke="#444" stroke-width="1.200"/><path d="M2 7.500c0-3 1-5 3-5s3 2 3 5" fill="none" stroke="#444" stroke-width="1.200"/><path d="M9.500 3.500h4.500v7.500h-3.500M12 9.500l-1.700 1.500 1.700 1.500" fill="none" stroke="#444" stroke-width="1.200"/></svg>
<!-- bottom bar -->
<div class="abs" style="left:0;top:690px;width:1075px;height:36px;background:#f3f3f3;border-top:1px solid #e9e9e9"></div>
<div class="abs" style="left:0;top:691px;width:28px;height:35px;background:#e8e8e8"></div>
<svg style="left:7px;top:699px" width="16" height="14" viewBox="0 0 16 14"><path d="M8 1c3.800 0 6.800 2 6.800 4.800s-3 4.800-6.800 4.800c-.8 0-1.600-.1-2.300-.3l-3.500 2.500.9-3.500c-1.200-.9-1.900-2.100-1.900-3.500 0-2.800 3-4.800 6.800-4.800z" fill="#f1f5f4" stroke="#4a5a5a" stroke-width="1.100" stroke-linejoin="round"/><circle cx="5.300" cy="5.800" r=".8" fill="#7aa"/><circle cx="8" cy="5.800" r=".8" fill="#7aa"/><circle cx="10.700" cy="5.800" r=".8" fill="#7aa"/></svg>
<div class="abs" style="left:39px;top:702px;width:0;height:0;border-left:5.500px solid transparent;border-right:5.500px solid transparent;border-bottom:6px solid #222"></div>
<svg style="left:63px;top:698px" width="16" height="16" viewBox="0 0 16 16"><circle cx="8" cy="8" r="7.800" fill="#17a46d"/><path d="M8 3.800v8.400M3.800 8h8.400" stroke="#fff" stroke-width="2"/></svg>
<div class="abs" style="left:93px;top:691px;width:78px;height:25px;background:#fff;border-radius:0 0 5px 5px;box-shadow:0 1px 2px rgba(0,0,0,.18)"></div>
<div class="t" style="left:103.500px;top:698px;font-size:10.500px;font-weight:bold;color:#222;letter-spacing:-.35px">Overview</div>
<div class="car" style="left:153px;top:702.500px;border-top-color:#777;border-left-width:3.500px;border-right-width:3.500px;border-top-width:4px"></div>
<div class="abs" style="left:1000.500px;top:694px;width:30.500px;height:23px;background:#fff"></div>
<div class="t" style="left:1002px;top:701px;font-size:11px;font-weight:bold;color:#333;letter-spacing:-.4px">100%</div>
<div class="abs" style="left:1033px;top:694px;width:14px;height:23px;background:#fff"></div>
<svg style="left:1036px;top:704px" width="8" height="5" viewBox="0 0 8 5"><path d="M1 .8l3 3 3-3" fill="none" stroke="#444" stroke-width="1.100"/></svg>
<div class="t" style="left:1056px;top:698px;font-size:15px;font-weight:bold;color:#333">+</div>
<svg style="left:1085px;top:700px" width="13" height="13" viewBox="0 0 13 13"><path d="M1 1l4 4M12 1l-4 4M1 12l4-4M12 12l-4-4" stroke="#333" stroke-width="1.200"/><path d="M1 4v-3h3M12 4v-3h-3M1 9v3h3M12 9v3h-3" fill="none" stroke="#333" stroke-width="1.300"/></svg>

</div></div></div>
<!-- ======================= TABLET ======================= -->
<div id="tab"><div class="clip"><div class="in">
<div class="t" style="left:10.5px;top:4.8px;font-size:8px;font-weight:bold;color:#333;letter-spacing:-.2px">9:41 AM&nbsp; Tue 9 Jan</div>
<div class="t" style="left:158px;width:200px;text-align:center;top:4.9px;font-size:5.5px;color:#666;letter-spacing:.8px">•••</div>
<svg style="left:437px;top:4px" width="12" height="8" viewBox="0 0 12 8"><path d="M1 8v-2M3.700 8v-3.500M6.400 8v-5.500M9.100 8v-7.500" stroke="#222" stroke-width="2"/></svg>
<svg style="left:448px;top:3.5px" width="10" height="8" viewBox="0 0 10 8"><path d="M.8 3a6 6 0 0 1 8.400 0M2.300 4.800a3.800 3.800 0 0 1 5.400 0" fill="none" stroke="#222" stroke-width="1.300"/><circle cx="5" cy="6.800" r="1.100" fill="#222"/></svg>
<svg style="left:460px;top:3.5px" width="6" height="9" viewBox="0 0 6 9"><rect x=".5" y="3" width="5" height="5.500" rx="1" fill="#222"/><path d="M1.500 3.500v-1.500a1.500 1.500 0 0 1 3 0v1.500" fill="none" stroke="#222" stroke-width="1"/></svg>
<div class="t" style="left:468px;top:4.8px;font-size:8px;font-weight:bold;color:#333;letter-spacing:-.2px">100%</div>
<svg style="left:490px;top:4.5px" width="17" height="7" viewBox="0 0 17 7"><rect x=".4" y=".4" width="14" height="6.200" rx="1.600" fill="#111"/><path d="M15.300 2.200v2.600" stroke="#777" stroke-width="1.200"/></svg>
<svg style="left:14px;top:25px" width="8" height="13" viewBox="0 0 8 13"><path d="M7 1l-5.500 5.500 5.500 5.500" fill="none" stroke="#222" stroke-width="1.600"/></svg>
<svg style="left:36px;top:26px" width="11" height="11" viewBox="0 0 11 11"><path d="M3.500 1l-2.500 2.500 2.500 2.500M1.500 3.500h5a3.200 3.200 0 0 1 0 6.400h-2" fill="none" stroke="#c4c4c4" stroke-width="1.100"/></svg>
<svg style="left:60px;top:26px" width="11" height="11" viewBox="0 0 11 11"><path d="M7.500 1l2.500 2.500-2.500 2.500M9.500 3.500h-5a3.200 3.200 0 0 0 0 6.400h2" fill="none" stroke="#c4c4c4" stroke-width="1.100"/></svg>
<div class="t" style="left:157.6px;width:200px;text-align:center;top:20.6px;font-size:8.5px;color:#333">Campaign Tracker</div>
<svg style="left:443px;top:25px" width="13" height="13" viewBox="0 0 13 13"><circle cx="6.500" cy="4.300" r="2.800" fill="none" stroke="#222" stroke-width="1.300"/><path d="M1.200 11.500c0-3 2.300-4.300 5.300-4.300s5.300 1.300 5.300 4.300z" fill="none" stroke="#222" stroke-width="1.300"/></svg>
<svg style="left:469px;top:26px" width="14" height="12" viewBox="0 0 14 12"><rect x="1" y="1" width="12" height="8" rx="2" fill="none" stroke="#222" stroke-width="1.300"/><path d="M4 9v2.500l3-2.500" fill="#222" stroke="#222" stroke-width="1"/><path d="M4 4h6M4 6.300h4" stroke="#222" stroke-width=".9"/></svg>
<div class="t" style="left:399.4px;width:200px;text-align:center;top:28.1px;font-size:7.5px;color:#333;letter-spacing:1.2px">•••</div>
<div class="abs" style="left:13px;top:49.5px;width:37.500px;height:15.500px;border-radius:8px;background:#1fa463"></div>
<div class="t" style="left:-68.1px;width:200px;text-align:center;top:53.1px;font-size:10px;font-weight:bold;color:#fff;letter-spacing:-.2px">Home</div>
<div class="t" style="left:64.5px;top:53.1px;font-size:10px;color:#222;letter-spacing:-.1px">Insert</div>
<div class="t" style="left:109px;top:53.1px;font-size:10px;color:#222;letter-spacing:-.1px">Formulas</div>
<div class="t" style="left:167.6px;top:53.1px;font-size:10px;color:#222;letter-spacing:-.1px">Data</div>
<div class="t" style="left:207px;top:53.1px;font-size:10px;color:#222;letter-spacing:-.1px">Review</div>
<div class="t" style="left:257.6px;top:53.1px;font-size:10px;color:#222;letter-spacing:-.1px">View</div>
<svg style="left:13px;top:75px" width="12" height="14" viewBox="0 0 12 14"><rect x="1" y="2" width="8.500" height="10" rx="1.500" fill="none" stroke="#555" stroke-width="1.200"/><rect x="3.300" y=".7" width="4" height="2.600" rx=".8" fill="#f2f2f2" stroke="#555" stroke-width="1"/><circle cx="9" cy="11" r="2.600" fill="#3aa76d" stroke="#f2f2f2" stroke-width=".8"/></svg>
<svg style="left:37px;top:76px" width="13" height="12" viewBox="0 0 13 12"><rect x=".5" y=".5" width="9" height="3.200" rx="1.500" fill="#2f7be6"/><path d="M9.500 2h1.500a1 1 0 0 1 1 1v1.600a1 1 0 0 1-1 1h-4.500v1.600" fill="none" stroke="#444" stroke-width="1"/><rect x="5.400" y="7.300" width="2.200" height="4" rx="1" fill="#fff" stroke="#444" stroke-width="1"/></svg>
<div class="abs" style="left:59px;top:73.5px;width:68px;height:17px;border-radius:3px;background:#e0e1e3"></div>
<div class="t" style="left:65px;top:77.8px;font-size:10px;color:#222">Roboto</div>
<div class="car" style="left:114px;top:80px;border-top-color:#111;border-left-width:3.500px;border-right-width:3.500px;border-top-width:4px"></div>
<div class="abs" style="left:130.5px;top:73.5px;width:48px;height:17px;border-radius:3px;background:#e0e1e3"></div>
<div class="t" style="left:136px;top:77.8px;font-size:10px;color:#222">10 pt</div>
<div class="car" style="left:167px;top:80px;border-top-color:#111;border-left-width:3.500px;border-right-width:3.500px;border-top-width:4px"></div>
<div class="abs" style="left:186px;top:74px;width:1px;height:15px;background:#e2e2e2"></div>
<div class="t" style="left:101px;width:200px;text-align:center;top:75.6px;font-size:13.5px;font-weight:bold;color:#333">B</div>
<div class="t" style="left:128.4px;width:200px;text-align:center;top:75.6px;font-size:13.5px;font-style:italic;color:#333;font-family:'Liberation Serif',serif">I</div>
<div class="t" style="left:153.7px;width:200px;text-align:center;top:75.8px;font-size:13px;color:#444;text-decoration:underline">U</div>
<div class="t" style="left:180px;width:200px;text-align:center;top:75.8px;font-size:13px;color:#444;text-decoration:line-through">S</div>
<svg style="left:299px;top:76px" width="11" height="10" viewBox="0 0 11 10"><path d="M4.300 1l4.200 4.200-3.200 3.200a.8.800 0 0 1-1.100 0l-2.700-2.700a.8.800 0 0 1 0-1.100z" fill="#333"/><path d="M9.300 6.300c.6.900.9 1.400.9 1.900a.9.900 0 0 1-1.800 0c0-.5.300-1 .9-1.900z" fill="#333"/></svg>
<div class="abs" style="left:298.5px;top:87px;width:12px;height:1.600px;background:#e6b422"></div>
<svg style="left:315px;top:80px" width="6" height="4" viewBox="0 0 6 4"><path d="M.5 .5l2.500 2.500 2.500-2.500" fill="none" stroke="#888" stroke-width="1"/></svg>
<div class="t" style="left:233px;width:200px;text-align:center;top:76.3px;font-size:10px;color:#333;font-weight:bold">A</div>
<div class="abs" style="left:327.5px;top:87px;width:11px;height:1.800px;background:#222"></div>
<svg style="left:342.5px;top:80px" width="6" height="4" viewBox="0 0 6 4"><path d="M.5 .5l2.500 2.500 2.500-2.500" fill="none" stroke="#888" stroke-width="1"/></svg>
<svg style="left:356.5px;top:76.5px" width="11" height="11" viewBox="0 0 11 11"><rect x=".5" y=".5" width="10" height="10" fill="none" stroke="#b5b5b5" stroke-width="1"/><path d="M5.500 .5v10M.5 5.500h10" stroke="#cfcfcf" stroke-width="1"/></svg>
<svg style="left:374px;top:80px" width="6" height="4" viewBox="0 0 6 4"><path d="M.5 .5l2.500 2.500 2.500-2.500" fill="none" stroke="#aaa" stroke-width="1"/></svg>
<div class="abs" style="left:387.5px;top:74px;width:1px;height:15px;background:#e0e0e0"></div>
<svg style="left:398px;top:77px" width="11" height="10" viewBox="0 0 11 10"><path d="M0 .7h11M2.500 4h6M0 7.300h11M2.500 10.600h6" stroke="#666" stroke-width="1.100" transform="scale(1 .9)"/></svg>
<svg style="left:424px;top:75px" width="12" height="14" viewBox="0 0 12 14"><path d="M0 7h12" stroke="#777" stroke-width="1.100"/><path d="M6 0v4.800M6 14v-4.800" stroke="#2f7be6" stroke-width="1.200"/><path d="M4 3.200l2 2 2-2M4 10.800l2-2 2 2" fill="none" stroke="#2f7be6" stroke-width="1.100"/></svg>
<div class="abs" style="left:446px;top:74px;width:1px;height:15px;background:#e0e0e0"></div>
<svg style="left:459px;top:76px" width="13" height="12" viewBox="0 0 13 12"><path d="M1 4c.5 5 6 6.500 10 2" fill="none" stroke="#2f7be6" stroke-width="1.200"/><path d="M9 4.500l3.200-.3-.5 3.200z" fill="#2f7be6"/><path d="M3.500 1l2 0M4.500 1v3.500" stroke="#555" stroke-width="1"/></svg>
<svg style="left:486px;top:77px" width="11" height="10" viewBox="0 0 11 10"><path d="M0 .7h11M5 4h6M5 7.300h6M0 10.600h11" stroke="#666" stroke-width="1.100" transform="scale(1 .9)"/><path d="M0 4.800h3.200M2 3.500l1.400 1.300-1.400 1.300" fill="none" stroke="#2f7be6" stroke-width="1"/></svg>
<svg style="left:511px;top:77px" width="4" height="10" viewBox="0 0 4 10"><path d="M0 .7h4M0 4h4M0 7.300h4" stroke="#2f7be6" stroke-width="1.100"/></svg>
<div class="abs" style="left:0px;top:99.5px;width:520px;height:552px;background:#fff"></div>
<div class="abs" style="left:28px;top:100px;width:1px;height:19px;background:#ececec"></div>
<div class="t" style="left:9px;top:103.1px;font-size:12.5px;font-family:'Liberation Serif',serif;font-style:italic;font-weight:bold;color:#222">f<span style="font-size:10.500px">x</span></div>
<div class="t" style="left:35.5px;top:105.7px;font-size:8.3px;color:#a3a3a3">Enter text or formula</div>
<svg style="left:498px;top:106.5px" width="8" height="5" viewBox="0 0 8 5"><path d="M1 .8l3 3 3-3" fill="none" stroke="#222" stroke-width="1.300"/></svg>
<div class="abs" style="left:0px;top:119.5px;width:520px;height:13.500px;background:#f4f4f4"></div>
<div class="abs" style="left:0px;top:133px;width:22px;height:518.500px;background:#f4f4f4"></div>
<svg style="left:14px;top:125px" width="5" height="5" viewBox="0 0 5 5"><path d="M5 0v5h-5z" fill="#cfcfcf"/></svg>
<div class="t" style="left:-50.6px;width:200px;text-align:center;top:121.6px;font-size:7.5px;color:#333">A</div>
<div class="t" style="left:16px;width:200px;text-align:center;top:121.6px;font-size:7.5px;color:#333">B</div>
<div class="t" style="left:88px;width:200px;text-align:center;top:121.6px;font-size:7.5px;color:#333">C</div>
<div class="t" style="left:152.7px;width:200px;text-align:center;top:121.6px;font-size:7.5px;color:#333">D</div>
<div class="t" style="left:210.6px;width:200px;text-align:center;top:121.6px;font-size:7.5px;color:#333">E</div>
<div class="t" style="left:275.3px;width:200px;text-align:center;top:121.6px;font-size:7.5px;color:#333">F</div>
<div class="t" style="left:343.4px;width:200px;text-align:center;top:121.6px;font-size:7.5px;color:#333">G</div>
<div class="t" style="left:410.6px;width:200px;text-align:center;top:121.6px;font-size:7.5px;color:#333">H</div>
<div class="t" style="left:-89.5px;width:200px;text-align:center;top:134.6px;font-size:8px;color:#333">1</div>
<div class="t" style="left:-89.5px;width:200px;text-align:center;top:146.4px;font-size:8px;color:#333">2</div>
<div class="t" style="left:-89.5px;width:200px;text-align:center;top:158.1px;font-size:8px;color:#333">3</div>
<div class="t" style="left:-89.5px;width:200px;text-align:center;top:169.9px;font-size:8px;color:#333">4</div>
<div class="t" style="left:-89.5px;width:200px;text-align:center;top:181.6px;font-size:8px;color:#333">5</div>
<div class="t" style="left:-89.5px;width:200px;text-align:center;top:193.4px;font-size:8px;color:#333">6</div>
<div class="t" style="left:-89.5px;width:200px;text-align:center;top:205.1px;font-size:8px;color:#333">7</div>
<div class="t" style="left:-89.5px;width:200px;text-align:center;top:216.9px;font-size:8px;color:#333">8</div>
<div class="t" style="left:-89.5px;width:200px;text-align:center;top:228.6px;font-size:8px;color:#333">9</div>
<div class="t" style="left:-89.5px;width:200px;text-align:center;top:240.4px;font-size:8px;color:#333">10</div>
<div class="t" style="left:-89.5px;width:200px;text-align:center;top:252.1px;font-size:8px;color:#333">11</div>
<div class="t" style="left:-89.5px;width:200px;text-align:center;top:263.9px;font-size:8px;color:#333">12</div>
<div class="t" style="left:-89.5px;width:200px;text-align:center;top:275.6px;font-size:8px;color:#333">13</div>
<div class="t" style="left:-89.5px;width:200px;text-align:center;top:287.4px;font-size:8px;color:#333">14</div>
<div class="t" style="left:-89.5px;width:200px;text-align:center;top:299.1px;font-size:8px;color:#333">15</div>
<div class="t" style="left:-89.5px;width:200px;text-align:center;top:310.9px;font-size:8px;color:#333">16</div>
<div class="t" style="left:-89.5px;width:200px;text-align:center;top:322.6px;font-size:8px;color:#333">17</div>
<div class="t" style="left:-89.5px;width:200px;text-align:center;top:334.4px;font-size:8px;color:#333">18</div>
<div class="t" style="left:-89.5px;width:200px;text-align:center;top:469.4px;font-size:8px;color:#333">26</div>
<div class="t" style="left:-89.5px;width:200px;text-align:center;top:481.1px;font-size:8px;color:#333">27</div>
<div class="t" style="left:-89.5px;width:200px;text-align:center;top:492.9px;font-size:8px;color:#333">28</div>
<div class="t" style="left:-89.5px;width:200px;text-align:center;top:504.6px;font-size:8px;color:#333">29</div>
<div class="t" style="left:-89.5px;width:200px;text-align:center;top:516.4px;font-size:8px;color:#333">30</div>
<div class="t" style="left:-89.5px;width:200px;text-align:center;top:528.1px;font-size:8px;color:#333">31</div>
<div class="t" style="left:-89.5px;width:200px;text-align:center;top:539.8px;font-size:8px;color:#333">32</div>
<div class="t" style="left:-89.5px;width:200px;text-align:center;top:551.6px;font-size:8px;color:#333">33</div>
<div class="t" style="left:-89.5px;width:200px;text-align:center;top:563.3px;font-size:8px;color:#333">34</div>
<div class="t" style="left:-89.5px;width:200px;text-align:center;top:575.1px;font-size:8px;color:#333">35</div>
<div class="t" style="left:-89.5px;width:200px;text-align:center;top:586.8px;font-size:8px;color:#333">36</div>
<div class="t" style="left:-89.5px;width:200px;text-align:center;top:598.5px;font-size:8px;color:#333">37</div>
<div class="t" style="left:-89.5px;width:200px;text-align:center;top:610.3px;font-size:8px;color:#333">38</div>
<div class="t" style="left:-89.5px;width:200px;text-align:center;top:622px;font-size:8px;color:#333">39</div>
<div class="t" style="left:-89.5px;width:200px;text-align:center;top:633.8px;font-size:8px;color:#333">40</div>
<div class="t" style="left:-89.5px;width:200px;text-align:center;top:645.5px;font-size:8px;color:#333">41</div>
<div class="t" style="left:-89.5px;width:200px;text-align:center;top:349.6px;font-size:8px;color:#333">19</div>
<div class="t" style="left:-89.5px;width:200px;text-align:center;top:367.2px;font-size:8px;color:#333">20</div>
<div class="t" style="left:-89.5px;width:200px;text-align:center;top:384.9px;font-size:8px;color:#333">21</div>
<div class="t" style="left:-89.5px;width:200px;text-align:center;top:402.5px;font-size:8px;color:#333">22</div>
<div class="t" style="left:-89.5px;width:200px;text-align:center;top:420.2px;font-size:8px;color:#333">23</div>
<div class="t" style="left:-89.5px;width:200px;text-align:center;top:437.8px;font-size:8px;color:#333">24</div>
<div class="t" style="left:-89.5px;width:200px;text-align:center;top:455.5px;font-size:8px;color:#333">25</div>
<div class="abs" style="left:22px;top:139px;width:305px;height:198px;background:#fff;border:1px solid #e4e4e4"></div>
<div class="abs" style="left:335px;top:139px;width:190px;height:198px;background:#fff;border:1px solid #e4e4e4"></div>
<div class="t" style="left:75px;width:200px;text-align:center;top:150.7px;font-size:12.3px;color:#111">Revenue generated $ by campaign</div>
<div class="t" style="left:442.2px;top:150.6px;font-size:10.350px;color:#111">Overall campaign metrics</div>
<svg style="left:0;top:0" width="520" height="700" viewBox="0 0 520 700"><path d="M171.3 250.8L171.3 184.2A66.6 66.6 0 0 1 218.2 203.5Z" fill="#3498db"/><path d="M171.3 250.8L218.2 203.5A66.6 66.6 0 0 1 237.5 258.3Z" fill="#2ecc71"/><path d="M171.3 250.8L237.5 258.3A66.6 66.6 0 0 1 175.9 317.2Z" fill="#f1c40f"/><path d="M171.3 250.8L175.9 317.2A66.6 66.6 0 0 1 125.3 298.9Z" fill="#e67e22"/><path d="M171.3 250.8L125.3 298.9A66.6 66.6 0 0 1 108.1 229.8Z" fill="#ee4576"/><path d="M171.3 250.8L108.1 229.8A66.6 66.6 0 0 1 171.3 184.2Z" fill="#9b59b6"/><path d="M197.0 189.0L201.0 184.0" stroke="#3498db" stroke-width="1"/><path d="M237.0 229.0L243.0 227.5" stroke="#2ecc71" stroke-width="1"/><path d="M217.0 298.0L222.0 303.0" stroke="#f1c40f" stroke-width="1"/><path d="M149.0 314.0L146.0 319.0" stroke="#e67e22" stroke-width="1"/><path d="M101.0 268.0L106.0 267.0" stroke="#ee4576" stroke-width="1"/><path d="M127.0 193.0L131.0 197.0" stroke="#9b59b6" stroke-width="1"/></svg>
<div class="t" style="left:207px;top:184.2px;font-size:6.45px;color:#222">New Year Promo (12.43%)</div>
<div class="t" style="left:247.4px;top:226.2px;font-size:6.45px;color:#222">Valentine's Day (14.36%)</div>
<div class="t" style="left:229px;top:301.9px;font-size:6.45px;color:#222">New Feature Launch (22.10%)</div>
<div class="t" style="left:77.4px;top:317.4px;font-size:6.45px;color:#222">Anniversary (13.26%)</div>
<div class="t" style="left:29.4px;top:267.4px;font-size:6.45px;color:#222">Spring Break (17.96%)</div>
<div class="t" style="left:51.6px;top:192.1px;font-size:6.45px;color:#222">Back to School (19.89%)</div>
<div class="t" style="left:210.5px;width:200px;text-align:right;top:181px;font-size:6.4px;color:#222">New Year Promo</div>
<div class="abs" style="left:418px;top:174.4px;width:98px;height:4px;background:#2e8bd8"></div>
<div class="abs" style="left:418px;top:178.4px;width:80px;height:4px;background:#2fc866"></div>
<div class="abs" style="left:418px;top:182.4px;width:70px;height:4px;background:#f1c40f"></div>
<div class="t" style="left:210.5px;width:200px;text-align:right;top:204.1px;font-size:6.4px;color:#222">Valentine's Day</div>
<div class="abs" style="left:418px;top:197.5px;width:98px;height:4px;background:#2e8bd8"></div>
<div class="abs" style="left:418px;top:201.5px;width:80px;height:4px;background:#2fc866"></div>
<div class="abs" style="left:418px;top:205.5px;width:70px;height:4px;background:#f1c40f"></div>
<div class="t" style="left:210.5px;width:200px;text-align:right;top:227.2px;font-size:6.4px;color:#222">New Feature Launch</div>
<div class="abs" style="left:418px;top:220.6px;width:98px;height:4px;background:#2e8bd8"></div>
<div class="abs" style="left:418px;top:224.6px;width:80px;height:4px;background:#2fc866"></div>
<div class="abs" style="left:418px;top:228.6px;width:70px;height:4px;background:#f1c40f"></div>
<div class="t" style="left:210.5px;width:200px;text-align:right;top:250.3px;font-size:6.4px;color:#222">Anniversary</div>
<div class="abs" style="left:418px;top:243.7px;width:98px;height:4px;background:#2e8bd8"></div>
<div class="abs" style="left:418px;top:247.7px;width:80px;height:4px;background:#2fc866"></div>
<div class="abs" style="left:418px;top:251.7px;width:70px;height:4px;background:#f1c40f"></div>
<div class="t" style="left:210.5px;width:200px;text-align:right;top:273.4px;font-size:6.4px;color:#222">Spring Break</div>
<div class="abs" style="left:418px;top:266.8px;width:98px;height:4px;background:#2e8bd8"></div>
<div class="abs" style="left:418px;top:270.8px;width:80px;height:4px;background:#2fc866"></div>
<div class="abs" style="left:418px;top:274.8px;width:70px;height:4px;background:#f1c40f"></div>
<div class="t" style="left:210.5px;width:200px;text-align:right;top:296.5px;font-size:6.4px;color:#222">Back to School</div>
<div class="abs" style="left:418px;top:289.9px;width:98px;height:4px;background:#2e8bd8"></div>
<div class="abs" style="left:418px;top:293.9px;width:80px;height:4px;background:#2fc866"></div>
<div class="abs" style="left:418px;top:297.9px;width:70px;height:4px;background:#f1c40f"></div>
<div class="abs" style="left:417.5px;top:170px;width:1px;height:145px;background:#444"></div>
<div class="th2" style="left:22px;top:344.7px;width:55.0px">Campaign ID</div>
<div class="th2" style="left:77px;top:344.7px;width:76.0px">Campaign Name</div>
<div class="th2" style="left:153px;top:344.7px;width:70.0px">Campaign Type</div>
<div class="th2" style="left:223px;top:344.7px;width:61.0px">Target Audience</div>
<div class="th2" style="left:284px;top:344.7px;width:55.0px">Open Rate %</div>
<div class="th2" style="left:339px;top:344.7px;width:74.0px">CTR %</div>
<div class="th2" style="left:413px;top:344.7px;width:68.0px">Conversions</div>
<div class="th2" style="left:481px;top:344.7px;width:37.0px">Revenue $</div>
<div class="td2 r" style="left:22px;top:360.6px;width:55.0px">1</div>
<div class="td2" style="left:77px;top:360.6px;width:76.0px">New Year Promo</div>
<div class="td2" style="left:153px;top:360.6px;width:70.0px">Seasonal</div>
<div class="td2" style="left:223px;top:360.6px;width:61.0px">All Subscribers</div>
<div class="td2 r" style="left:284px;top:360.6px;width:55.0px">24</div>
<div class="td2 r" style="left:339px;top:360.6px;width:74.0px">9</div>
<div class="td2 r" style="left:413px;top:360.6px;width:68.0px">520</div>
<div class="td2 r" style="left:481px;top:360.6px;width:37.0px">6240</div>
<div class="td2 r" style="left:22px;top:378.3px;width:55.0px">2</div>
<div class="td2" style="left:77px;top:378.3px;width:76.0px">Valentine's Day</div>
<div class="td2" style="left:153px;top:378.3px;width:70.0px">Seasonal</div>
<div class="td2" style="left:223px;top:378.3px;width:61.0px">Couples</div>
<div class="td2 r" style="left:284px;top:378.3px;width:55.0px">27</div>
<div class="td2 r" style="left:339px;top:378.3px;width:74.0px">11</div>
<div class="td2 r" style="left:413px;top:378.3px;width:68.0px">610</div>
<div class="td2 r" style="left:481px;top:378.3px;width:37.0px">7210</div>
<div class="td2 r" style="left:22px;top:396px;width:55.0px">3</div>
<div class="td2" style="left:77px;top:396px;width:76.0px">New Feature Launch</div>
<div class="td2" style="left:153px;top:396px;width:70.0px">Product Launch</div>
<div class="td2" style="left:223px;top:396px;width:61.0px">All Subscribers</div>
<div class="td2 r" style="left:284px;top:396px;width:55.0px">32</div>
<div class="td2 r" style="left:339px;top:396px;width:74.0px">14</div>
<div class="td2 r" style="left:413px;top:396px;width:68.0px">940</div>
<div class="td2 r" style="left:481px;top:396px;width:37.0px">11100</div>
<div class="td2 r" style="left:22px;top:413.7px;width:55.0px">4</div>
<div class="td2" style="left:77px;top:413.7px;width:76.0px">Anniversary</div>
<div class="td2" style="left:153px;top:413.7px;width:70.0px">Seasonal</div>
<div class="td2" style="left:223px;top:413.7px;width:61.0px">All Subscribers</div>
<div class="td2 r" style="left:284px;top:413.7px;width:55.0px">26</div>
<div class="td2 r" style="left:339px;top:413.7px;width:74.0px">10</div>
<div class="td2 r" style="left:413px;top:413.7px;width:68.0px">560</div>
<div class="td2 r" style="left:481px;top:413.7px;width:37.0px">6660</div>
<div class="td2 r" style="left:22px;top:431.4px;width:55.0px">5</div>
<div class="td2" style="left:77px;top:431.4px;width:76.0px">Spring Break</div>
<div class="td2" style="left:153px;top:431.4px;width:70.0px">Clearance</div>
<div class="td2" style="left:223px;top:431.4px;width:61.0px">Parents</div>
<div class="td2 r" style="left:284px;top:431.4px;width:55.0px">29</div>
<div class="td2 r" style="left:339px;top:431.4px;width:74.0px">12</div>
<div class="td2 r" style="left:413px;top:431.4px;width:68.0px">760</div>
<div class="td2 r" style="left:481px;top:431.4px;width:37.0px">9020</div>
<div class="td2 r" style="left:22px;top:449.1px;width:55.0px">6</div>
<div class="td2" style="left:77px;top:449.1px;width:76.0px">Back to School</div>
<div class="td2" style="left:153px;top:449.1px;width:70.0px">Seasonal</div>
<div class="td2" style="left:223px;top:449.1px;width:61.0px">Parents</div>
<div class="td2 r" style="left:284px;top:449.1px;width:55.0px">30</div>
<div class="td2 r" style="left:339px;top:449.1px;width:74.0px">13</div>
<div class="td2 r" style="left:413px;top:449.1px;width:68.0px">840</div>
<div class="td2 r" style="left:481px;top:449.1px;width:37.0px">9990</div>
<svg style="left:25px;top:603.5px" width="50" height="50" viewBox="0 0 50 50"><circle cx="25" cy="25" r="24.500" fill="#f3f3f3"/><circle cx="25" cy="25" r="15.500" fill="#fafafa"/><circle cx="25" cy="25" r="10.500" fill="#e1e3e2"/><path d="M20 5.500l5-3 5 3M20 44.500l5 3 5-3M5.500 20l-3 5 3 5M44.500 20l3 5-3 5" fill="none" stroke="#dcdcdc" stroke-width="1"/></svg>
<div class="abs" style="left:0px;top:651.5px;width:520px;height:46px;background:#f1f1f1"></div>
<div class="abs" style="left:15px;top:661.5px;width:0;height:0;border-left:3.500px solid transparent;border-right:3.500px solid transparent;border-bottom:4px solid #222"></div>
<div class="t" style="left:-53.5px;width:200px;text-align:center;top:656.3px;font-size:15px;color:#222">+</div>
<div class="abs" style="left:67.5px;top:651.5px;width:57.500px;height:22.500px;background:#fff;border-radius:0 0 4px 4px"></div>
<div class="t" style="left:-3.8px;width:200px;text-align:center;top:659.9px;font-size:9px;color:#222">Overview</div>
<div class="abs" style="left:174px;top:683px;width:168px;height:3.600px;border-radius:2px;background:#111"></div>
</div></div></div>

<!-- ======================= PHONE ======================= -->
<div id="ph"><div class="clip"><div class="in">
<div class="t" style="left:30.5px;top:16.9px;font-size:9.3px;font-weight:bold;color:#222;letter-spacing:-.2px">9:41</div>
<svg style="left:196px;top:16.9px" width="12" height="8" viewBox="0 0 12 8"><path d="M1 8v-2M3.800 8v-3.500M6.600 8v-5.500M9.400 8v-7.500" stroke="#111" stroke-width="1.800"/></svg>
<svg style="left:210px;top:16.4px" width="11" height="9" viewBox="0 0 11 9"><path d="M.8 3.200a6.500 6.500 0 0 1 9.400 0M2.600 5.200a4 4 0 0 1 5.800 0" fill="none" stroke="#111" stroke-width="1.400"/><circle cx="5.500" cy="7.400" r="1.200" fill="#111"/></svg>
<svg style="left:223px;top:17.4px" width="16" height="7" viewBox="0 0 16 7"><rect x=".3" y=".3" width="13" height="6.400" rx="1.800" fill="#111"/><path d="M14.500 2.300v2.400" stroke="#666" stroke-width="1.100"/></svg>
<svg style="left:18.5px;top:36.4px" width="21" height="21" viewBox="0 0 21 21"><circle cx="10.500" cy="10.500" r="10.500" fill="#eef0ee"/><path d="M2.500 20c.8-4 3.500-5.500 8-5.500s7.200 1.500 8 5.500a10.500 10.500 0 0 1-16 0z" fill="#b9c2b4"/><ellipse cx="10" cy="8.500" rx="3.300" ry="4.200" fill="#a98876"/><path d="M6.500 7.500c-.3-3.200 1.300-4.700 3.600-4.700 2.200 0 3.600 1.500 3.300 4.200-1.500-1.800-4.800-2-6.900.5z" fill="#3d322c"/><path d="M9.300 13l1.200 4 1.200-4z" fill="#6f7a68"/></svg>
<div class="t" style="left:46.9px;top:42px;font-size:13.5px;font-weight:bold;color:#111;letter-spacing:-.47px">Recents</div>
<div class="car" style="left:101px;top:47.9px;border-top-color:#333;border-left-width:3px;border-right-width:3px;border-top-width:3.500px"></div>
<svg style="left:204px;top:42.9px" width="11" height="11" viewBox="0 0 11 11"><g fill="none" stroke="#222" stroke-width="1.200"><rect x=".8" y=".8" width="3.600" height="3.600" rx="1"/><rect x="6.600" y=".8" width="3.600" height="3.600" rx="1"/><rect x=".8" y="6.600" width="3.600" height="3.600" rx="1"/><rect x="6.600" y="6.600" width="3.600" height="3.600" rx="1"/></g></svg>
<svg style="left:228px;top:42.9px" width="13" height="11" viewBox="0 0 13 11"><path d="M1 1h4.500l1 1.800h5.500v7.400h-11z" fill="none" stroke="#222" stroke-width="1.300" stroke-linejoin="round"/><path d="M1 4.600h5" stroke="#222" stroke-width="1.100"/></svg>
<div class="t" style="left:19.2px;top:79.6px;font-size:6.8px;color:#8a8f94;letter-spacing:-.1px">TODAY</div>
<div class="abs" style="left:16px;top:93.2px;width:226px;height:127.3px;background:#fff;border-radius:3px"></div>
<div class="abs" style="left:16px;top:135.9px;width:226px;height:1px;background:#f6f8fa"></div>
<div class="abs" style="left:16px;top:178.3px;width:226px;height:1px;background:#f6f8fa"></div>
<svg style="left:24.5px;top:107.1px" width="15" height="15" viewBox="0 0 15 15"><rect x=".5" y=".5" width="13" height="13" rx="2.200" fill="#25a86b"/><rect x="3.200" y="3.200" width="7.600" height="7.600" rx=".8" fill="none" stroke="#d5f3e3" stroke-width="1"/><path d="M3.200 6h7.600M6 6v4.800" stroke="#d5f3e3" stroke-width="1"/></svg>
<div class="t" style="left:50.8px;top:104px;font-size:10.4px;color:#151515;letter-spacing:-.25px;-webkit-text-stroke:.4px #151515">My first Spreadsheet</div>
<svg style="left:50.5px;top:119.5px" width="9" height="6" viewBox="0 0 9 6"><circle cx="3" cy="1.800" r="1.600" fill="#c0626b"/><path d="M0 6c0-2 1.200-2.800 3-2.800s3 .8 3 2.800z" fill="#c0626b"/><circle cx="6.600" cy="2.200" r="1.200" fill="#d68f96"/><path d="M6.300 6h2.700c0-1.700-.9-2.400-2.300-2.400-.3 0-.5 0-.7.100.6.600.8 1.400.3 2.300z" fill="#d68f96"/></svg>
<div class="t" style="left:63px;top:120.2px;font-size:7.2px;color:#b9bcc0">Modified by</div>
<div class="t" style="left:105px;top:120.2px;font-size:7.2px;color:#7d8288;letter-spacing:-.1px">Warren Garrett</div>
<div class="t" style="left:127.2px;width:200px;text-align:center;top:106px;font-size:4.5px;color:#c9ccd0;letter-spacing:.8px">•••</div>
<div class="t" style="left:32.5px;width:200px;text-align:right;top:120.1px;font-size:6.3px;color:#7d8288">5:15pm</div>
<svg style="left:24.5px;top:149.8px" width="15" height="15" viewBox="0 0 15 15"><rect x=".5" y=".5" width="13" height="13" rx="2.200" fill="#25a86b"/><rect x="3.200" y="3.200" width="7.600" height="7.600" rx=".8" fill="none" stroke="#d5f3e3" stroke-width="1"/><path d="M3.200 6h7.600M6 6v4.800" stroke="#d5f3e3" stroke-width="1"/></svg>
<svg style="left:34.5px;top:146.8px" width="6" height="6" viewBox="0 0 6 6"><circle cx="3" cy="3" r="2.600" fill="#f08c2e" stroke="#fff" stroke-width=".6"/></svg>
<div class="t" style="left:50.8px;top:146.7px;font-size:10.4px;color:#151515;letter-spacing:-.25px;-webkit-text-stroke:.4px #151515">Untitled Spreadsheet</div>
<svg style="left:50.5px;top:162.2px" width="9" height="6" viewBox="0 0 9 6"><circle cx="3" cy="1.800" r="1.600" fill="#c0626b"/><path d="M0 6c0-2 1.200-2.800 3-2.800s3 .8 3 2.800z" fill="#c0626b"/><circle cx="6.600" cy="2.200" r="1.200" fill="#d68f96"/><path d="M6.300 6h2.700c0-1.700-.9-2.400-2.300-2.400-.3 0-.5 0-.7.100.6.600.8 1.400.3 2.300z" fill="#d68f96"/></svg>
<div class="t" style="left:63px;top:162.9px;font-size:7.2px;color:#b9bcc0">Modified by</div>
<div class="t" style="left:105px;top:162.9px;font-size:7.2px;color:#7d8288;letter-spacing:-.1px">Edward Lindgren</div>
<div class="t" style="left:127.2px;width:200px;text-align:center;top:148.7px;font-size:4.5px;color:#c9ccd0;letter-spacing:.8px">•••</div>
<div class="t" style="left:32.5px;width:200px;text-align:right;top:162.8px;font-size:6.3px;color:#7d8288">3:10 pm</div>
<svg style="left:24.5px;top:192.5px" width="15" height="15" viewBox="0 0 15 15"><rect x=".5" y=".5" width="13" height="13" rx="2.200" fill="#25a86b"/><rect x="3.200" y="3.200" width="7.600" height="7.600" rx=".8" fill="none" stroke="#d5f3e3" stroke-width="1"/><path d="M3.200 6h7.600M6 6v4.800" stroke="#d5f3e3" stroke-width="1"/></svg>
<div class="t" style="left:50.8px;top:189.4px;font-size:10.4px;color:#151515;letter-spacing:-.25px;-webkit-text-stroke:.4px #151515">Household expenses</div>
<svg style="left:50px;top:203.4px" width="9" height="9" viewBox="0 0 9 9"><circle cx="4.500" cy="4.500" r="4.300" fill="#f6a53c"/><circle cx="4.500" cy="4.500" r="2" fill="#fde8c8"/></svg>
<svg style="left:64.1px;top:204.9px" width="9" height="6" viewBox="0 0 9 6"><circle cx="3" cy="1.800" r="1.600" fill="#c0626b"/><path d="M0 6c0-2 1.200-2.800 3-2.800s3 .8 3 2.800z" fill="#c0626b"/><circle cx="6.600" cy="2.200" r="1.200" fill="#d68f96"/><path d="M6.300 6h2.700c0-1.700-.9-2.400-2.300-2.400-.3 0-.5 0-.7.100.6.600.8 1.400.3 2.300z" fill="#d68f96"/></svg>
<div class="t" style="left:76.6px;top:205.6px;font-size:7.2px;color:#b9bcc0">Modified by</div>
<div class="t" style="left:118.6px;top:205.6px;font-size:7.2px;color:#7d8288;letter-spacing:-.1px">Abayo Stevens</div>
<div class="t" style="left:127.2px;width:200px;text-align:center;top:191.3px;font-size:4.5px;color:#c9ccd0;letter-spacing:.8px">•••</div>
<div class="t" style="left:32.5px;width:200px;text-align:right;top:205.4px;font-size:6.3px;color:#7d8288">10:16 am</div>
<svg style="left:152.5px;top:189.3px" width="8" height="8" viewBox="0 0 8 8"><path d="M1 7l2.600-2.600M3 2.500l2.500 2.500M4.300 1.200l2.500 2.500-1.500 1.500-2.500-2.500z" fill="#bbb" stroke="#b0b0b0" stroke-width=".9"/></svg>
<div class="t" style="left:19.2px;top:233.1px;font-size:6.8px;color:#8a8f94;letter-spacing:-.1px">YESTERDAY</div>
<div class="abs" style="left:16px;top:247.2px;width:226px;height:85.6px;background:#fff;border-radius:3px"></div>
<div class="abs" style="left:167.8px;top:247.2px;width:74.2px;height:44px;background:#f8fafb;border-left:1px solid #eef0f3"></div>
<div class="t" style="left:19.1px;top:257.6px;font-size:10.5px;color:#151515;letter-spacing:-.3px;-webkit-text-stroke:.4px #151515">bill calculations...</div>
<div class="t" style="left:16.9px;top:273.9px;font-size:7.2px;color:#b9bcc0">by</div>
<div class="t" style="left:27.5px;top:273.9px;font-size:7.2px;color:#7d8288;letter-spacing:-.1px">Roelof Bekkenenks</div>
<div class="t" style="left:50.3px;width:200px;text-align:center;top:259.4px;font-size:4.5px;color:#c9ccd0;letter-spacing:.8px">•••</div>
<div class="t" style="left:-45.5px;width:200px;text-align:right;top:273.6px;font-size:6.3px;color:#7d8288">6:00 pm</div>
<svg style="left:174.9px;top:255.6px" width="25" height="25" viewBox="0 0 25 25"><circle cx="12.500" cy="12.500" r="12.500" fill="#f4ab41"/><path d="M8 16.500l2.800-2.800M10.200 10.500l4.300 4.300M12.500 8l4.500 4.500-2.500 1.500-3.500-3.500z" fill="#fce9c7" stroke="#fce9c7" stroke-width=".9"/><path d="M7.500 18l10-11" stroke="#fff" stroke-width="1.100"/></svg>
<svg style="left:210px;top:255.6px" width="25" height="25" viewBox="0 0 25 25"><circle cx="12.500" cy="12.500" r="12.500" fill="#2f6fd9"/><g fill="none" stroke="#fff" stroke-width="1.100"><circle cx="9.300" cy="12.500" r="1.700"/><circle cx="15.500" cy="9" r="1.700"/><circle cx="15.500" cy="16" r="1.700"/><path d="M10.800 11.700l3.200-1.900M10.800 13.300l3.200 1.900"/></g></svg>
<svg style="left:24.5px;top:304.7px" width="15" height="15" viewBox="0 0 15 15"><rect x=".5" y=".5" width="13" height="13" rx="2.200" fill="#25a86b"/><rect x="3.200" y="3.200" width="7.600" height="7.600" rx=".8" fill="none" stroke="#d5f3e3" stroke-width="1"/><path d="M3.200 6h7.600M6 6v4.800" stroke="#d5f3e3" stroke-width="1"/></svg>
<svg style="left:34.5px;top:301.7px" width="6" height="6" viewBox="0 0 6 6"><circle cx="3" cy="3" r="2.600" fill="#f08c2e" stroke="#fff" stroke-width=".6"/></svg>
<div class="t" style="left:50.8px;top:301.6px;font-size:10.4px;color:#151515;letter-spacing:-.25px;-webkit-text-stroke:.4px #151515">Income tax details</div>
<svg style="left:50.5px;top:317.1px" width="9" height="6" viewBox="0 0 9 6"><circle cx="3" cy="1.800" r="1.600" fill="#c0626b"/><path d="M0 6c0-2 1.200-2.800 3-2.800s3 .8 3 2.800z" fill="#c0626b"/><circle cx="6.600" cy="2.200" r="1.200" fill="#d68f96"/><path d="M6.300 6h2.700c0-1.700-.9-2.400-2.300-2.400-.3 0-.5 0-.7.100.6.600.8 1.400.3 2.300z" fill="#d68f96"/></svg>
<div class="t" style="left:63px;top:317.8px;font-size:7.2px;color:#b9bcc0">Modified by</div>
<div class="t" style="left:105px;top:317.8px;font-size:7.2px;color:#7d8288;letter-spacing:-.1px">Shaamikh Al Hakim</div>
<div class="t" style="left:127.2px;width:200px;text-align:center;top:303.5px;font-size:4.5px;color:#c9ccd0;letter-spacing:.8px">•••</div>
<div class="t" style="left:32.5px;width:200px;text-align:right;top:317.6px;font-size:6.3px;color:#7d8288">2:10 pm</div>
<div class="t" style="left:19.2px;top:345.4px;font-size:6.8px;color:#8a8f94;letter-spacing:-.1px">EARLIER</div>
<div class="abs" style="left:16px;top:358.7px;width:226px;height:84.4px;background:#fff;border-radius:3px"></div>
<div class="abs" style="left:16px;top:401.2px;width:226px;height:1px;background:#f6f8fa"></div>
<svg style="left:24.5px;top:372.9px" width="15" height="15" viewBox="0 0 15 15"><rect x=".5" y=".5" width="13" height="13" rx="2.200" fill="#25a86b"/><rect x="3.200" y="3.200" width="7.600" height="7.600" rx=".8" fill="none" stroke="#d5f3e3" stroke-width="1"/><path d="M3.200 6h7.600M6 6v4.800" stroke="#d5f3e3" stroke-width="1"/></svg>
<div class="t" style="left:50.8px;top:369.8px;font-size:10.4px;color:#151515;letter-spacing:-.25px;-webkit-text-stroke:.4px #151515">Professional tax details</div>
<svg style="left:50.5px;top:385.3px" width="9" height="6" viewBox="0 0 9 6"><circle cx="3" cy="1.800" r="1.600" fill="#c0626b"/><path d="M0 6c0-2 1.200-2.800 3-2.800s3 .8 3 2.800z" fill="#c0626b"/><circle cx="6.600" cy="2.200" r="1.200" fill="#d68f96"/><path d="M6.300 6h2.700c0-1.700-.9-2.400-2.300-2.400-.3 0-.5 0-.7.100.6.600.8 1.400.3 2.300z" fill="#d68f96"/></svg>
<div class="t" style="left:63px;top:386px;font-size:7.2px;color:#b9bcc0">Modified by</div>
<div class="t" style="left:105px;top:386px;font-size:7.2px;color:#7d8288;letter-spacing:-.1px">Abayo Stevens</div>
<div class="t" style="left:127.2px;width:200px;text-align:center;top:371.7px;font-size:4.5px;color:#c9ccd0;letter-spacing:.8px">•••</div>
<div class="t" style="left:32.5px;width:200px;text-align:right;top:385.8px;font-size:6.3px;color:#7d8288">10 Aug 2020</div>
<svg style="left:24.5px;top:415.4px" width="15" height="15" viewBox="0 0 15 15"><rect x=".5" y=".5" width="13" height="13" rx="2.200" fill="#25a86b"/><rect x="3.200" y="3.200" width="7.600" height="7.600" rx=".8" fill="none" stroke="#d5f3e3" stroke-width="1"/><path d="M3.200 6h7.600M6 6v4.800" stroke="#d5f3e3" stroke-width="1"/></svg>
<svg style="left:34.5px;top:412.4px" width="6" height="6" viewBox="0 0 6 6"><circle cx="3" cy="3" r="2.600" fill="#f08c2e" stroke="#fff" stroke-width=".6"/></svg>
<div class="t" style="left:50.8px;top:412.3px;font-size:10.4px;color:#151515;letter-spacing:-.25px;-webkit-text-stroke:.4px #151515">My expenses</div>
<svg style="left:50px;top:426.3px" width="9" height="9" viewBox="0 0 9 9"><circle cx="4.500" cy="4.500" r="4.300" fill="#f6a53c"/><circle cx="4.500" cy="4.500" r="2" fill="#fde8c8"/></svg>
<svg style="left:64.1px;top:427.8px" width="9" height="6" viewBox="0 0 9 6"><circle cx="3" cy="1.800" r="1.600" fill="#c0626b"/><path d="M0 6c0-2 1.200-2.800 3-2.800s3 .8 3 2.800z" fill="#c0626b"/><circle cx="6.600" cy="2.200" r="1.200" fill="#d68f96"/><path d="M6.300 6h2.700c0-1.700-.9-2.400-2.300-2.400-.3 0-.5 0-.7.100.6.600.8 1.400.3 2.300z" fill="#d68f96"/></svg>
<div class="t" style="left:76.6px;top:428.5px;font-size:7.2px;color:#b9bcc0">Modified by</div>
<div class="t" style="left:118.6px;top:428.5px;font-size:7.2px;color:#7d8288;letter-spacing:-.1px">Matthew Lina</div>
<div class="t" style="left:127.2px;width:200px;text-align:center;top:414.2px;font-size:4.5px;color:#c9ccd0;letter-spacing:.8px">•••</div>
<div class="t" style="left:32.5px;width:200px;text-align:right;top:428.3px;font-size:6.3px;color:#7d8288">19 July 2020</div>
<svg style="left:122.5px;top:412.2px" width="8" height="8" viewBox="0 0 8 8"><path d="M1 7l2.600-2.600M3 2.500l2.500 2.500M4.300 1.200l2.500 2.500-1.500 1.500-2.500-2.500z" fill="#bbb" stroke="#b0b0b0" stroke-width=".9"/></svg>
<div class="abs" style="left:-0.5px;top:454.5px;width:262px;height:75px;background:#fff"></div>
<svg style="left:22.5px;top:477px" width="14" height="14" viewBox="0 0 14 14"><rect x=".3" y=".3" width="13.400" height="13.400" rx="2.600" fill="#25a86b"/><rect x="2.800" y="2.800" width="8.400" height="8.400" rx="1" fill="#17834f"/><path d="M4.200 5.500h1.500M4.200 8.500h1.500M7 5.500h3M7 8.500h3" stroke="#bfeed6" stroke-width="1"/></svg>
<svg style="left:72.5px;top:476.5px" width="15" height="14" viewBox="0 0 15 14"><path d="M3 1h9l2 6.500v4.500a1 1 0 0 1-1 1h-11a1 1 0 0 1-1-1v-4.500z" fill="none" stroke="#666" stroke-width="1" stroke-linejoin="round"/><path d="M1 7.500h13M3.500 10.500h8" stroke="#666" stroke-width="1"/></svg>
<svg style="left:123px;top:476.5px" width="15" height="14" viewBox="0 0 15 14"><rect x=".8" y=".5" width="13.400" height="13" rx="5" fill="none" stroke="#666" stroke-width="1"/><path d="M7.500 4.500v5M5 7h5" stroke="#666" stroke-width="1"/></svg>
<svg style="left:173.5px;top:476px" width="14" height="15" viewBox="0 0 14 15"><path d="M6.500 1.500l3 .8c.8 3 .5 6 1.500 9.500h-8c2-3 2.500-6.500 3.500-10.300zM6 12.500a1.500 1.500 0 0 0 3 0" fill="none" stroke="#666" stroke-width="1" stroke-linejoin="round"/></svg>
<svg style="left:224.5px;top:476.5px" width="14" height="14" viewBox="0 0 14 14"><circle cx="7" cy="7" r="2" fill="none" stroke="#666" stroke-width="1"/><path d="M7 .8l1.300 1.600 2-.5.600 2 1.900.9-.9 1.900.9 1.900-1.900.9-.6 2-2-.5-1.300 1.600-1.300-1.600-2 .5-.6-2-1.900-.9.900-1.900-.9-1.900 1.900-.9.600-2 2 .5z" fill="none" stroke="#666" stroke-width="1" stroke-linejoin="round"/></svg>
<div class="t" style="left:-70.8px;width:200px;text-align:center;top:498px;font-size:6.6px;font-weight:bold;color:#222">Files</div>
<div class="t" style="left:-20.5px;width:200px;text-align:center;top:498px;font-size:6.6px;color:#999">Places</div>
<div class="t" style="left:30.2px;width:200px;text-align:center;top:498px;font-size:6.6px;color:#999">New</div>
<div class="t" style="left:80.5px;width:200px;text-align:center;top:498px;font-size:6.6px;color:#999">Notifications</div>
<div class="t" style="left:131.5px;width:200px;text-align:center;top:498px;font-size:6.6px;color:#999">Settings</div>
<svg style="left:27.7px;top:508.3px" width="3" height="3" viewBox="0 0 3 3"><circle cx="1.500" cy="1.500" r="1.300" fill="#25a86b"/></svg>
</div></div></div>

</body>
</html>
